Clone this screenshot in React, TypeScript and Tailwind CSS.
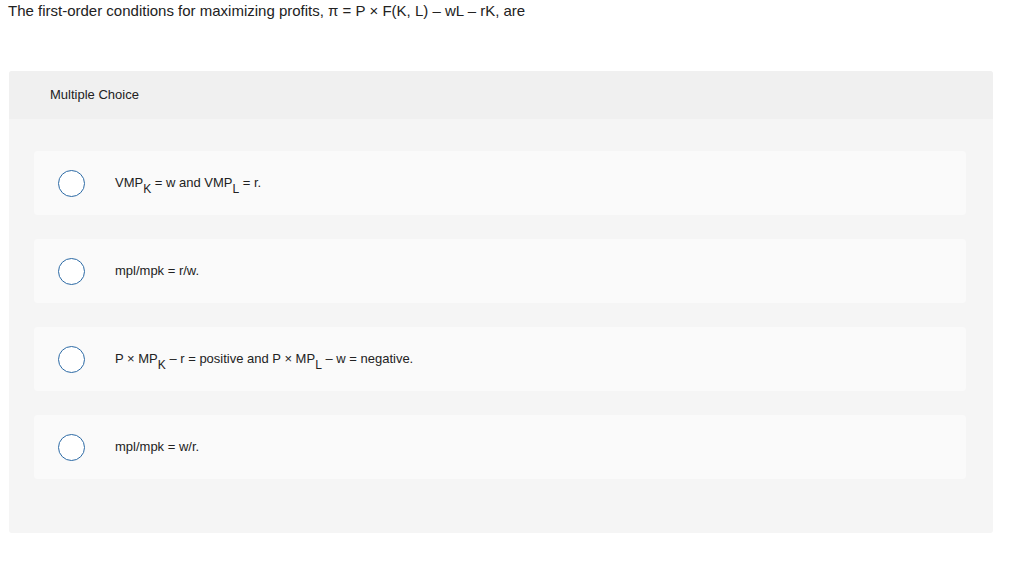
const Sub = ({ children }: { children: React.ReactNode }) => (
    <sub className="text-[12px] align-[-3px] leading-none">{children}</sub>
);

const options: React.ReactNode[] = [
    <>
        VMP<Sub>K</Sub> = w and VMP<Sub>L</Sub> = r.
    </>,
    <>mpl/mpk = r/w.</>,
    <>
        P × MP<Sub>K</Sub> – r = positive and P × MP<Sub>L</Sub> – w =
        negative.
    </>,
    <>mpl/mpk = w/r.</>,
];

const App = () => {
    return (
        <div className="w-[1024px] h-[564px] bg-white font-['Liberation_Sans',sans-serif] text-[#222]">
            <div className="pl-[8px] pt-[2px] text-[15px] leading-[18px]">
                The first-order conditions for maximizing profits, π = P × F(K,
                L) – wL – rK, are
            </div>
            <div className="ml-[9px] mt-[51px] w-[984px] rounded-[3px] bg-[#f5f5f5] overflow-hidden">
                <div className="h-[48px] bg-[#f0f0f0] pl-[41px] flex items-center text-[13px]">
                    Multiple Choice
                </div>
                <div className="flex flex-col gap-[24px] pt-[32px] pb-[54px] pl-[25px] pr-[27px]">
                    {options.map((opt, i) => (
                        <div
                            key={i}
                            className="h-[64px] rounded-[4px] bg-[#fafafa] flex items-center"
                        >
                            <div className="ml-[24px] w-[27px] h-[27px] rounded-full border-[1.5px] border-[#2c6aa5] bg-white shrink-0" />
                            <div className="ml-[30px] text-[13px] text-[#222]">
                                {opt}
                            </div>
                        </div>
                    ))}
                </div>
            </div>
        </div>
    );
};

export default App;
